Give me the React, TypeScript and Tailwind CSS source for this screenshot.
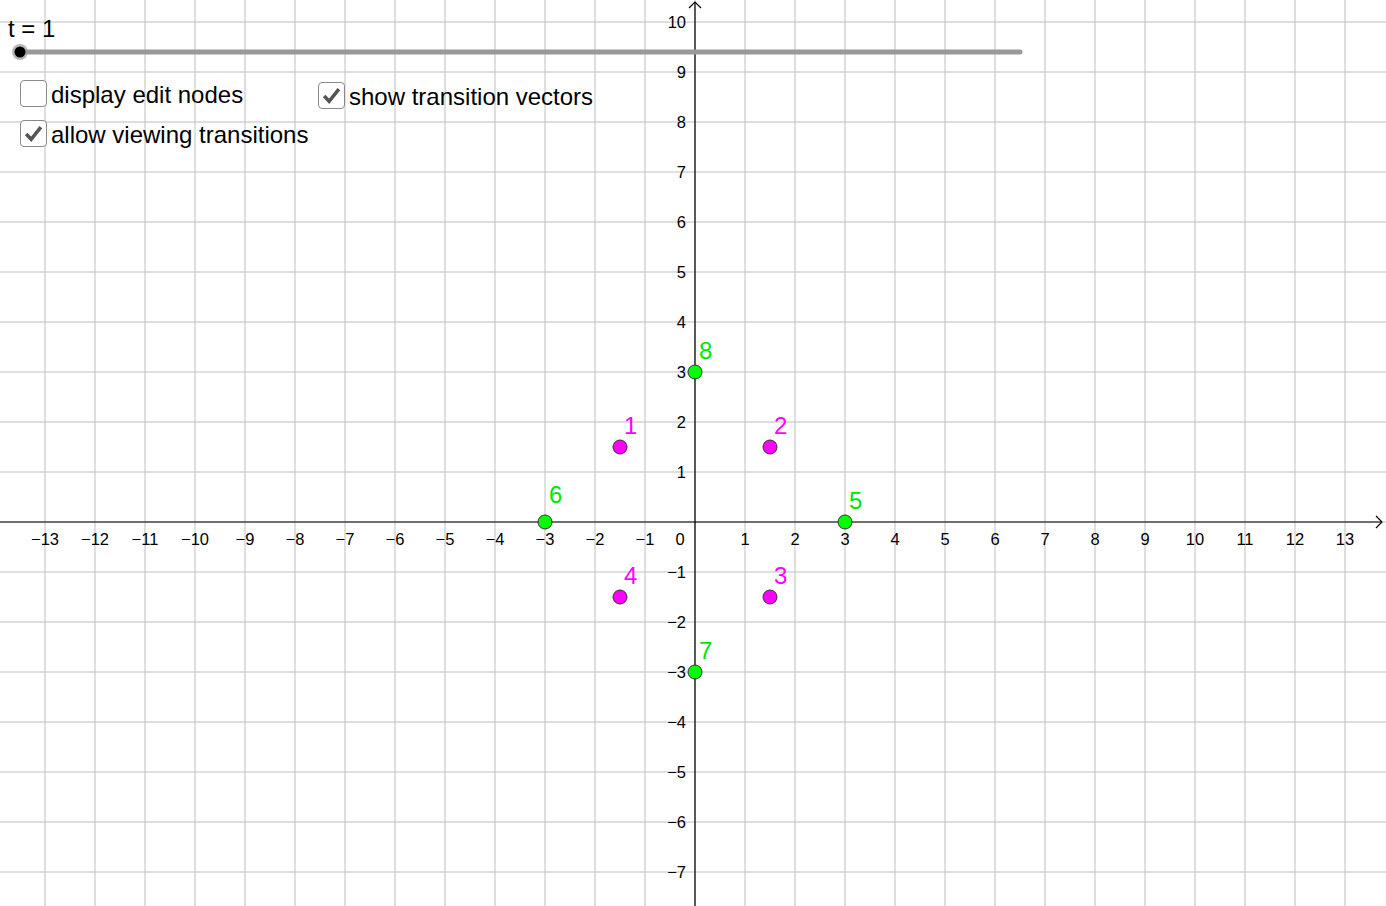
import React from "react";

const OX = 695;
const OY = 522;
const U = 50;

const FONT = '"Liberation Sans", Arial, sans-serif';

const pink = [
  { id: "1", x: -1.5, y: 1.5, dy: 0 },
  { id: "2", x: 1.5, y: 1.5, dy: 0 },
  { id: "3", x: 1.5, y: -1.5, dy: 0 },
  { id: "4", x: -1.5, y: -1.5, dy: 0 },
];

const green = [
  { id: "5", x: 3, y: 0, dy: 0 },
  { id: "6", x: -3, y: 0, dy: -6 },
  { id: "7", x: 0, y: -3, dy: 0 },
  { id: "8", x: 0, y: 3, dy: 0 },
];

const num = (n: number) => (n < 0 ? "\u2212" + Math.abs(n) : String(n));

function Graph() {
  const xs: number[] = [];
  for (let k = -13; k <= 13; k++) xs.push(k);
  const ys: number[] = [];
  for (let k = 10; k >= -7; k--) ys.push(k);

  return (
    <svg width="1386" height="906" className="absolute left-0 top-0" fontFamily={FONT}>
      {xs.map((k) => (
        <line key={"gx" + k} x1={OX + k * U} y1={0} x2={OX + k * U} y2={906} stroke="#bfbfbf" strokeWidth="1" />
      ))}
      {[...ys, 11].map((k) => (
        <line key={"gy" + k} x1={0} y1={OY - k * U} x2={1386} y2={OY - k * U} stroke="#bfbfbf" strokeWidth="1" />
      ))}

      {/* axes */}
      <line x1={0} y1={OY} x2={1382} y2={OY} stroke="#000" strokeWidth="1.2" />
      <polyline points="1376,516 1382,522 1376,528" fill="none" stroke="#000" strokeWidth="1.2" />
      <line x1={OX} y1={2} x2={OX} y2={906} stroke="#000" strokeWidth="1.2" />
      <polyline points="689,8 695,2 701,8" fill="none" stroke="#000" strokeWidth="1.2" />

      {xs
        .filter((k) => k !== 0)
        .map((k) => (
          <text key={"lx" + k} x={OX + k * U} y={545} fontSize="16.5" textAnchor="middle" fill="#000">
            {num(k)}
          </text>
        ))}
      <text x={680} y={545} fontSize="16.5" textAnchor="middle" fill="#000">
        0
      </text>
      {ys
        .filter((k) => k !== 0)
        .map((k) => (
          <text key={"ly" + k} x={686} y={OY - k * U + 6} fontSize="16.5" textAnchor="end" fill="#000">
            {num(k)}
          </text>
        ))}

      {pink.map((p) => (
        <g key={"p" + p.id}>
          <circle cx={OX + p.x * U} cy={OY - p.y * U} r="7" fill="#ff00ff" stroke="#333" strokeWidth="1" />
          <text x={OX + p.x * U + 4} y={OY - p.y * U - 13 + p.dy} fontSize="24" fill="#ff00ff">
            {p.id}
          </text>
        </g>
      ))}
      {green.map((p) => (
        <g key={"g" + p.id}>
          <circle cx={OX + p.x * U} cy={OY - p.y * U} r="7" fill="#00ff00" stroke="#333" strokeWidth="1" />
          <text x={OX + p.x * U + 4} y={OY - p.y * U - 13 + p.dy} fontSize="24" fill="#00e600">
            {p.id}
          </text>
        </g>
      ))}

      {/* slider */}
      <line x1={20} y1={52} x2={1020} y2={52} stroke="#999" strokeWidth="5" strokeLinecap="round" />
      <circle cx={20} cy={52} r="8" fill="#9a9a9a" opacity="0.7" />
      <circle cx={20} cy={52} r="5.5" fill="#000" />
    </svg>
  );
}

function Box({ checked }: { checked: boolean }) {
  return (
    <span className="flex h-[27px] w-[27px] shrink-0 items-center justify-center rounded-[4px] border-[1.5px] border-[#8a8a8a] bg-white">
      {checked ? (
        <svg width="21" height="21" viewBox="0 0 20 20">
          <path d="M3 10.5 L7.8 15.5 L17 4" fill="none" stroke="#555" strokeWidth="3.4" />
        </svg>
      ) : null}
    </span>
  );
}

function Check({ label, checked }: { label: string; checked: boolean }) {
  return (
    <label className="flex items-center gap-[4px] text-[24px] leading-none text-black">
      <Box checked={checked} />
      <span className="pt-[3px]">{label}</span>
    </label>
  );
}

export default function App() {
  return (
    <div className="relative h-[906px] w-[1386px] overflow-hidden bg-white" style={{ fontFamily: FONT }}>
      <Graph />
      <div className="absolute left-[8px] top-[17px] text-[24px] leading-none text-black">t = 1</div>
      <div className="absolute left-[20px] top-[80px] flex flex-col gap-[13px]">
        <Check label="display edit nodes" checked={false} />
        <Check label="allow viewing transitions" checked={true} />
      </div>
      <div className="absolute left-[318px] top-[82px]">
        <Check label="show transition vectors" checked={true} />
      </div>
    </div>
  );
}
